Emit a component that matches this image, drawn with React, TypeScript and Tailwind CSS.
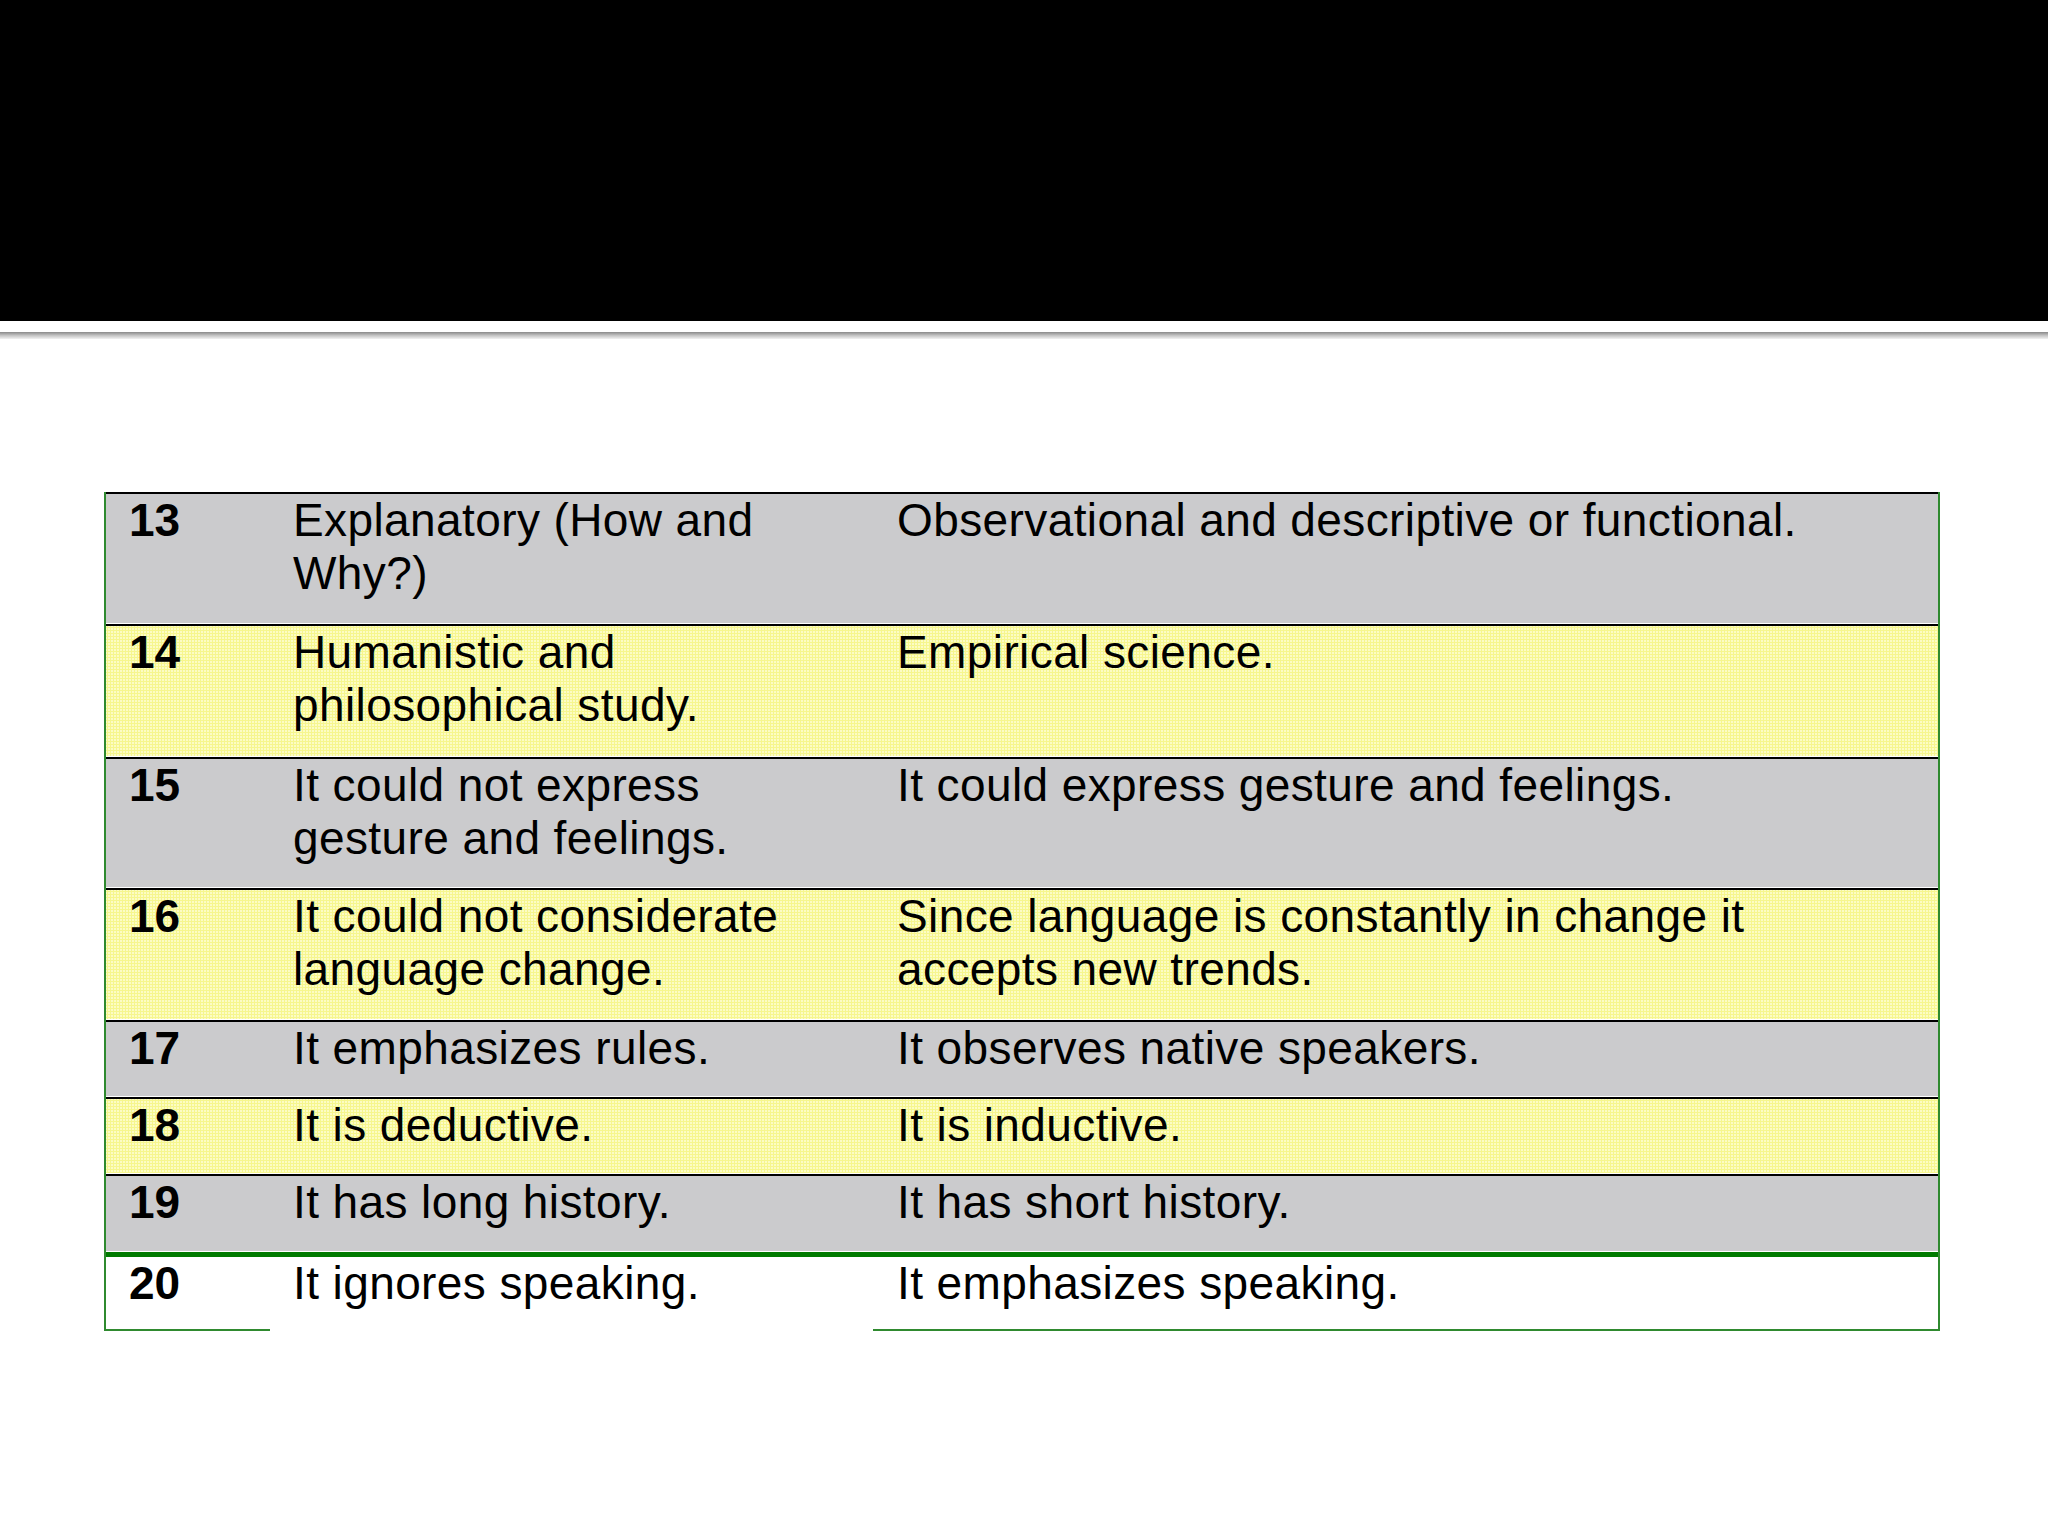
import React from 'react'

type Row = {
  num: string
  left: string[]
  right: string[]
  tone: 'gray' | 'yellow'
  height: string
}

const rows: Row[] = [
  { num: '13', left: ['Explanatory (How and', 'Why?)'], right: ['Observational and descriptive or functional.'], tone: 'gray', height: 'h-[132px]' },
  { num: '14', left: ['Humanistic and', 'philosophical study.'], right: ['Empirical science.'], tone: 'yellow', height: 'h-[133px]' },
  { num: '15', left: ['It could not express', 'gesture and feelings.'], right: ['It could express gesture and feelings.'], tone: 'gray', height: 'h-[131px]' },
  { num: '16', left: ['It could not considerate', 'language change.'], right: ['Since language is constantly in change it', 'accepts new trends.'], tone: 'yellow', height: 'h-[132px]' },
  { num: '17', left: ['It emphasizes rules.'], right: ['It observes native speakers.'], tone: 'gray', height: 'h-[77px]' },
  { num: '18', left: ['It is deductive.'], right: ['It is inductive.'], tone: 'yellow', height: 'h-[77px]' },
  { num: '19', left: ['It has long history.'], right: ['It has short history.'], tone: 'gray', height: 'h-[78px]' },
]

function Lines({ lines }: { lines: string[] }) {
  return (
    <>
      {lines.map((l, i) => (
        <div key={i} className="whitespace-nowrap">{l}</div>
      ))}
    </>
  )
}

export default function App() {
  return (
    <div className="w-[2048px] h-[1536px] bg-white text-black font-['Liberation_Sans',Arial,sans-serif]">
      <div className="h-[321px] bg-black" />
      <div className="h-[11px]" />
      <div className="h-[7px] bg-gradient-to-b from-[#8a8a8a] via-[#c4c4c4] to-[#f2f2f2]" />

      <div className="mt-[153px] ml-[104px] w-[1836px] border-x-2 border-[#2f8a2f] text-[46px] leading-[53px] tracking-[0.4px]">
        {rows.map((row) => (
          <div
            key={row.num}
            className={`flex border-t-2 border-black shadow-[inset_0_-1px_0_#ffffff] ${row.height} ${
              row.tone === 'gray'
                ? 'bg-[#cbcbcd]'
                : 'bg-[#fcfcc4] bg-[radial-gradient(#f6f68e_1px,transparent_1.2px)] bg-[length:3px_3px]'
            }`}
          >
            <div className="w-[164px] pl-[23px] font-bold tracking-normal">{row.num}</div>
            <div className="w-[603px] pl-[23px]">
              <Lines lines={row.left} />
            </div>
            <div className="w-[1065px] pl-[24px]">
              <Lines lines={row.right} />
            </div>
          </div>
        ))}

        <div className="flex h-[79px] border-t-[5px] border-[#007a00]">
          <div className="w-[164px] h-full pl-[23px] font-bold tracking-normal border-b-2 border-[#2f8a2f]">20</div>
          <div className="w-[603px] h-full pl-[23px]">It ignores speaking.</div>
          <div className="w-[1065px] h-full pl-[24px] border-b-2 border-[#2f8a2f]">It emphasizes speaking.</div>
        </div>
      </div>
    </div>
  )
}
